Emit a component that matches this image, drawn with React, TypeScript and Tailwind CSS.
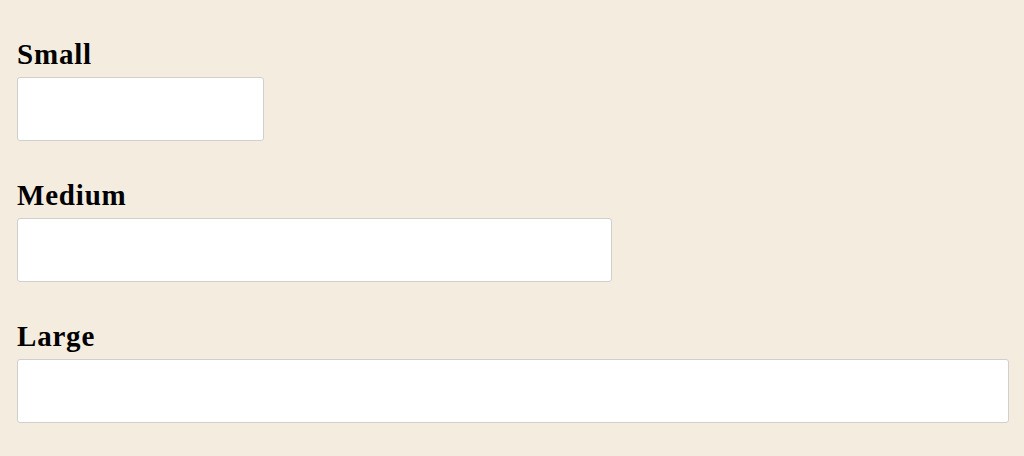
export default function App() {
  const fields = [
    { label: "Small", width: "w-[247px]" },
    { label: "Medium", width: "w-[595px]" },
    { label: "Large", width: "w-full" },
  ];

  return (
    <div className="min-h-[456px] w-full bg-[#f4eddf] pt-[36px] pr-[15px] pl-[17px] font-['Liberation_Serif',serif]">
      <form className="flex flex-col gap-[36px]">
        {fields.map((f) => (
          <label key={f.label} className="flex flex-col">
            <span className="mb-[5px] text-[29px] leading-[36px] font-bold tracking-[0.8px] text-black">
              {f.label}
            </span>
            <input
              type="text"
              className={`${f.width} h-[64px] rounded-[3px] border border-[#cfcfcf] bg-white px-3 outline-none`}
            />
          </label>
        ))}
      </form>
    </div>
  );
}
